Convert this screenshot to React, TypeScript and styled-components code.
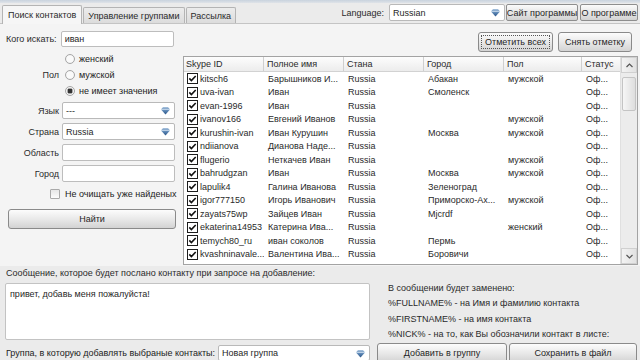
import React from "react";
import styled, { createGlobalStyle, css } from "styled-components";

const Global = createGlobalStyle`
  html, body { margin: 0; padding: 0; background: #ebebeb; }
  body { font-family: "Liberation Sans", Arial, sans-serif; font-size: 9px; color: #222; }
  * { box-sizing: border-box; }
`;

const Window = styled.div`
  width: 640px;
  height: 360px;
  overflow: hidden;
  background: #ebebeb;
  display: flex;
  flex-direction: column;
`;

const TopStrip = styled.div`
  height: 3px;
  flex: none;
  background: linear-gradient(#c9d3de, #dfe3e8);
`;

const TopBar = styled.div`
  height: 20px;
  flex: none;
  display: flex;
  align-items: flex-end;
  justify-content: space-between;
  padding: 0 2px 0 2px;
`;

const TabList = styled.div`
  display: flex;
  align-items: flex-end;
  height: 100%;
`;

const Tab = styled.div<{ $active?: boolean }>`
  height: ${(p) => (p.$active ? 19 : 16)}px;
  padding: 0 ${(p) => (p.$active ? 5 : 4)}px;
  margin-right: 1px;
  display: flex;
  align-items: center;
  white-space: nowrap;
  border: 1px solid #b4b4b4;
  border-bottom: none;
  border-radius: 2px 2px 0 0;
  background: ${(p) => (p.$active ? "#f6f6f6" : "linear-gradient(#ececec, #dcdcdc)")};
  color: #2a2a2a;
  ${(p) => p.$active && css`margin-bottom: -1px; position: relative; z-index: 1;`}
`;

const LangArea = styled.div`
  display: flex;
  align-items: center;
  height: 100%;
  padding-bottom: 1px;
`;

const LangLabel = styled.span`
  margin-right: 5px;
  color: #2a2a2a;
`;

const Combo = styled.div<{ $w?: number; $h?: number }>`
  width: ${(p) => (p.$w ? `${p.$w}px` : "100%")};
  height: ${(p) => p.$h ?? 17}px;
  display: flex;
  align-items: center;
  justify-content: space-between;
  padding: 0 3px 0 3px;
  background: #fff;
  border: 1px solid #b9b9b9;
  border-radius: 2px;
  white-space: nowrap;
  color: #1f1f1f;
`;

const SmallButton = styled.div<{ $w: number }>`
  width: ${(p) => p.$w}px;
  height: 17px;
  margin-left: ${(p) => (p.$w > 60 ? 1 : 2)}px;
  display: flex;
  align-items: center;
  justify-content: center;
  overflow: hidden;
  white-space: nowrap;
  border: 1px solid #8e8e8e;
  border-radius: 2px;
  background: linear-gradient(#fbfbfb, #e4e4e4 55%, #d2d2d2);
  color: #1f1f1f;
`;

const Button = styled.div<{ $w?: number; $h?: number; $focused?: boolean }>`
  width: ${(p) => (p.$w ? `${p.$w}px` : "100%")};
  height: ${(p) => p.$h ?? 20}px;
  display: flex;
  align-items: center;
  justify-content: center;
  white-space: nowrap;
  border: 1px solid #8a8a8a;
  border-radius: 3px;
  background: linear-gradient(#fcfcfc, #e9e9e9 50%, #d3d3d3);
  color: #1f1f1f;
  position: relative;
  ${(p) =>
    p.$focused &&
    css`
      &::after {
        content: "";
        position: absolute;
        inset: 2px;
        border: 1px dotted #555;
      }
    `}
`;

const TabPanel = styled.div`
  height: 243px;
  flex: none;
  display: grid;
  grid-template-columns: 183px 1fr;
  background: #f4f4f4;
  border-top: 1px solid #c4c4c4;
`;

const LeftCol = styled.div`
  display: flex;
  flex-direction: column;
  padding: 7px 0 0 0;
`;

const FormRow = styled.div<{ $mt?: number }>`
  display: grid;
  grid-template-columns: 59px 113px;
  column-gap: 3px;
  align-items: center;
  margin-top: ${(p) => p.$mt ?? 0}px;
`;

const SearchRow = styled.div`
  display: flex;
  align-items: center;
  padding-left: 6px;
`;

const Label = styled.span<{ $right?: boolean }>`
  text-align: ${(p) => (p.$right ? "right" : "left")};
  white-space: nowrap;
  color: #2a2a2a;
`;

const TextInput = styled.div<{ $w?: number; $h?: number }>`
  width: ${(p) => (p.$w ? `${p.$w}px` : "100%")};
  height: ${(p) => p.$h ?? 17}px;
  background: #fff;
  border: 1px solid #bdbdbd;
  border-radius: 2px;
  display: flex;
  align-items: center;
  padding-left: 3px;
  color: #1f1f1f;
`;

const RadioBlock = styled.div`
  display: grid;
  grid-template-columns: 59px 113px;
  column-gap: 3px;
  margin-top: 4px;
  align-items: center;
`;

const RadioList = styled.div`
  display: flex;
  flex-direction: column;
`;

const RadioRow = styled.div`
  height: 16px;
  display: flex;
  align-items: center;
  gap: 4px;
  white-space: nowrap;
`;

const RadioCircle = styled.span<{ $on?: boolean }>`
  width: 10px;
  height: 10px;
  border-radius: 50%;
  border: 1px solid #a6a6a6;
  background: radial-gradient(circle at 50% 50%, ${(p) => (p.$on ? "#333 0 2.2px, #b8b8b8 2.6px 3px," : "")} #fafafa 3.2px, #dcdcdc);
  flex: none;
  margin-left: 3px;
`;

const CheckRow = styled.div`
  display: flex;
  align-items: center;
  gap: 5px;
  margin: 7px 0 0 50px;
  white-space: nowrap;
`;

const EmptyCheck = styled.span`
  width: 10px;
  height: 10px;
  border: 1px solid #a9a9a9;
  border-radius: 1px;
  background: linear-gradient(#e6e6e6, #fbfbfb);
`;

const FindWrap = styled.div`
  padding: 10px 0 0 8px;
`;

const RightCol = styled.div`
  display: flex;
  flex-direction: column;
  padding: 8px 2px 0 0;
`;

const ActionRow = styled.div`
  display: flex;
  justify-content: flex-end;
  gap: 5px;
  padding-right: 6px;
`;

const Table = styled.div`
  margin-top: 4px;
  height: 209px;
  border: 1px solid #a3a3a3;
  background: #fff;
  display: grid;
  grid-template-columns: 1fr 17px;
  overflow: hidden;
`;

const cols = "80px 80px 80px 80px 78px 1fr";

const TableBody = styled.div`
  display: flex;
  flex-direction: column;
  overflow: hidden;
`;

const HeaderRow = styled.div`
  height: 15px;
  display: grid;
  grid-template-columns: ${cols};
  background: linear-gradient(#fdfdfd, #ececec);
  border-bottom: 1px solid #d2d2d2;
  flex: none;
`;

const HeaderCell = styled.div`
  padding-left: 3px;
  display: flex;
  align-items: center;
  border-right: 1px solid #cfcfcf;
  white-space: nowrap;
  overflow: hidden;
  color: #2a2a2a;
  &:first-child { padding-left: 2px; }
  &:last-child { border-right: none; }
`;

const DataRow = styled.div`
  height: 13.5px;
  display: grid;
  grid-template-columns: ${cols};
  align-items: center;
  flex: none;
`;

const Cell = styled.div`
  padding-left: 4px;
  white-space: nowrap;
  overflow: hidden;
  color: #2a2a2a;
`;

const IdCell = styled.div`
  display: flex;
  align-items: center;
  gap: 2px;
  padding-left: 3px;
  white-space: nowrap;
  overflow: hidden;
  color: #2a2a2a;
`;

const Scrollbar = styled.div`
  display: flex;
  flex-direction: column;
  background: #ececec;
  border-left: 1px solid #e0e0e0;
`;

const ScrollBtn = styled.div`
  height: 16px;
  flex: none;
  display: flex;
  align-items: center;
  justify-content: center;
  background: linear-gradient(90deg, #f3f3f3, #e2e2e2);
  border: 1px solid #d0d0d0;
`;

const Track = styled.div`
  flex: 1;
  position: relative;
`;

const Thumb = styled.div`
  position: absolute;
  left: 1px;
  right: 1px;
  top: 4px;
  height: 34px;
  border: 1px solid #c4c4c4;
  border-radius: 2px;
  background: linear-gradient(90deg, #f6f6f6, #dedede);
`;

const Bottom = styled.div`
  flex: 1;
  display: grid;
  grid-template-columns: 372px 1fr;
  column-gap: 5px;
  background: #ebebeb;
`;

const BottomLeft = styled.div`
  display: flex;
  flex-direction: column;
  padding: 1px 0 0 5px;
`;

const MsgLabel = styled.div`
  height: 12px;
  padding-left: 1px;
  display: flex;
  align-items: center;
  white-space: nowrap;
  color: #2a2a2a;
`;

const TextArea = styled.div`
  margin-top: 4px;
  height: 57px;
  width: 365px;
  background: #fff;
  border: 1px solid #c3c3c3;
  border-radius: 2px;
  padding: 5px 0 0 4px;
  color: #1f1f1f;
`;

const GroupRow = styled.div`
  margin-top: 5px;
  display: flex;
  align-items: center;
  justify-content: space-between;
  width: 365px;
  padding-left: 1px;
  white-space: nowrap;
`;

const BottomRight = styled.div`
  display: flex;
  flex-direction: column;
  padding-top: 14px;
`;

const InfoLine = styled.div`
  height: 15.5px;
  display: flex;
  align-items: center;
  padding-left: 11px;
  white-space: nowrap;
  color: #2a2a2a;
`;

const BottomButtons = styled.div`
  margin-top: 1px;
  display: grid;
  grid-template-columns: 130px 128px;
  column-gap: 2px;
`;

const ComboArrow = () => (
  <svg width="11" height="9" viewBox="0 0 11 9">
    <defs>
      <linearGradient id="gem" x1="0" y1="0" x2="0" y2="1">
        <stop offset="0" stopColor="#a9c3de" />
        <stop offset="0.5" stopColor="#5a85b4" />
        <stop offset="1" stopColor="#2c5688" />
      </linearGradient>
    </defs>
    <path d="M1 3.5 L3 1 H8 L10 3.5 L5.5 8.5 Z" fill="url(#gem)" />
    <path d="M1 3.5 H10" stroke="#d9e6f3" strokeWidth="0.7" />
  </svg>
);

const Check = () => (
  <svg width="11" height="11" viewBox="0 0 11 11" style={{ flex: "none" }}>
    <rect x="0.5" y="0.5" width="10" height="10" fill="#fff" stroke="#1d1d1d" />
    <path d="M2.3 5.4 L4.4 7.6 L8.7 3" fill="none" stroke="#111" strokeWidth="1.6" />
  </svg>
);

const Arrow = ({ up }: { up?: boolean }) => (
  <svg width="7" height="5" viewBox="0 0 7 5">
    <path d={up ? "M0.5 4 L3.5 1 L6.5 4" : "M0.5 1 L3.5 4 L6.5 1"} fill="none" stroke="#555" strokeWidth="1.2" />
  </svg>
);

const rows: [string, string, string, string, string][] = [
  ["kitsch6", "Барышников И...", "Russia", "Абакан", "мужской"],
  ["uva-ivan", "Иван", "Russia", "Смоленск", ""],
  ["evan-1996", "Иван", "Russia", "", ""],
  ["ivanov166", "Евгений Иванов", "Russia", "", "мужской"],
  ["kurushin-ivan", "Иван Курушин", "Russia", "Москва", "мужской"],
  ["ndiianova", "Дианова Наде...", "Russia", "", ""],
  ["flugerio", "Неткачев Иван", "Russia", "", "мужской"],
  ["bahrudgzan", "Иван", "Russia", "Москва", "мужской"],
  ["lapulik4", "Галина Иванова", "Russia", "Зеленоград", ""],
  ["igor777150", "Игорь Иванович", "Russia", "Приморско-Ах...", "мужской"],
  ["zayats75wp", "Зайцев Иван", "Russia", "Mjcrdf", ""],
  ["ekaterina14953", "Катерина Ива...", "Russia", "", "женский"],
  ["temych80_ru", "иван соколов", "Russia", "Пермь", ""],
  ["kvashninavale...", "Валентина Ива...", "Russia", "Боровичи", ""],
];

export default function App() {
  return (
    <Window>
      <Global />
      <TopStrip />
      <TopBar>
        <TabList>
          <Tab $active>Поиск контактов</Tab>
          <Tab>Управление группами</Tab>
          <Tab>Рассылка</Tab>
        </TabList>
        <LangArea>
          <LangLabel>Language:</LangLabel>
          <Combo $w={116}>
            Russian
            <ComboArrow />
          </Combo>
          <SmallButton $w={72}>Сайт программы</SmallButton>
          <SmallButton $w={58}>О программе</SmallButton>
        </LangArea>
      </TopBar>
      <TabPanel>
        <LeftCol>
          <SearchRow>
            <Label>Кого искать:</Label>
            <TextInput $w={113} $h={16} style={{ marginLeft: 4 }}>иван</TextInput>
          </SearchRow>
          <RadioBlock>
            <Label $right>Пол</Label>
            <RadioList>
              <RadioRow>
                <RadioCircle />
                женский
              </RadioRow>
              <RadioRow>
                <RadioCircle />
                мужской
              </RadioRow>
              <RadioRow>
                <RadioCircle $on />
                не имеет значения
              </RadioRow>
            </RadioList>
          </RadioBlock>
          <FormRow $mt={3}>
            <Label $right>Язык</Label>
            <Combo>
              ---
              <ComboArrow />
            </Combo>
          </FormRow>
          <FormRow $mt={4}>
            <Label $right>Страна</Label>
            <Combo>
              Russia
              <ComboArrow />
            </Combo>
          </FormRow>
          <FormRow $mt={4}>
            <Label $right>Область</Label>
            <TextInput />
          </FormRow>
          <FormRow $mt={4}>
            <Label $right>Город</Label>
            <TextInput />
          </FormRow>
          <CheckRow>
            <EmptyCheck />
            Не очищать уже найденых
          </CheckRow>
          <FindWrap>
            <Button $w={168}>Найти</Button>
          </FindWrap>
        </LeftCol>
        <RightCol>
          <ActionRow>
            <Button $w={75} $focused>Отметить всех</Button>
            <Button $w={74}>Снять отметку</Button>
          </ActionRow>
          <Table>
            <TableBody>
              <HeaderRow>
                <HeaderCell>Skype ID</HeaderCell>
                <HeaderCell>Полное имя</HeaderCell>
                <HeaderCell>Стана</HeaderCell>
                <HeaderCell>Город</HeaderCell>
                <HeaderCell>Пол</HeaderCell>
                <HeaderCell>Статус</HeaderCell>
              </HeaderRow>
              {rows.map((r) => (
                <DataRow key={r[0]}>
                  <IdCell>
                    <Check />
                    {r[0]}
                  </IdCell>
                  <Cell>{r[1]}</Cell>
                  <Cell>{r[2]}</Cell>
                  <Cell>{r[3]}</Cell>
                  <Cell>{r[4]}</Cell>
                  <Cell>Оф...</Cell>
                </DataRow>
              ))}
            </TableBody>
            <Scrollbar>
              <ScrollBtn>
                <Arrow up />
              </ScrollBtn>
              <Track>
                <Thumb />
              </Track>
              <ScrollBtn>
                <Arrow />
              </ScrollBtn>
            </Scrollbar>
          </Table>
        </RightCol>
      </TabPanel>
      <Bottom>
        <BottomLeft>
          <MsgLabel>Сообщение, которое будет послано контакту при запросе на добавление:</MsgLabel>
          <TextArea>привет, добавь меня пожалуйста!</TextArea>
          <GroupRow>
            Группа, в которую добавлять выбраные контакты:
            <Combo $w={152} $h={16}>
              Новая группа
              <ComboArrow />
            </Combo>
          </GroupRow>
        </BottomLeft>
        <BottomRight>
          <InfoLine>В сообщении будет заменено:</InfoLine>
          <InfoLine>%FULLNAME% - на Имя и фамилию контакта</InfoLine>
          <InfoLine>%FIRSTNAME% - на имя контакта</InfoLine>
          <InfoLine>%NICK% - на то, как Вы обозначили контакт в листе:</InfoLine>
          <BottomButtons>
            <Button>Добавить в группу</Button>
            <Button>Сохранить в файл</Button>
          </BottomButtons>
        </BottomRight>
      </Bottom>
    </Window>
  );
}
